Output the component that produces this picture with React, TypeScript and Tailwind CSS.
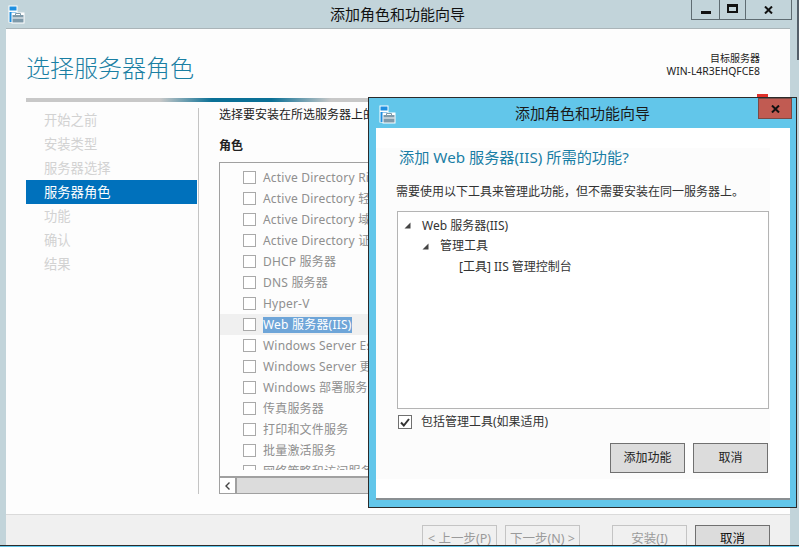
const font = "font-['Noto_Sans','Noto_Sans_CJK_SC',sans-serif]"

const steps = ["开始之前", "安装类型", "服务器选择", "服务器角色", "功能", "确认", "结果"]

const roles = [
  "Active Directory Rights Management Services",
  "Active Directory 轻型目录服务",
  "Active Directory 域服务",
  "Active Directory 证书服务",
  "DHCP 服务器",
  "DNS 服务器",
  "Hyper-V",
  "Web 服务器(IIS)",
  "Windows Server Essentials 体验",
  "Windows Server 更新服务",
  "Windows 部署服务",
  "传真服务器",
  "打印和文件服务",
  "批量激活服务",
  "网络策略和访问服务",
]

function WizardIcon() {
  return (
    <svg width="17" height="19" viewBox="0 0 17 19" className="block shrink-0">
      <rect x="0.5" y="0.5" width="9" height="17" fill="#ffffff" />
      <rect x="1.5" y="1.5" width="7" height="4" fill="#1f8fe0" />
      <rect x="1.5" y="7" width="7" height="10" fill="#1f8fe0" />
      <rect x="3.5" y="7.5" width="13" height="11" fill="#ffffff" />
      <rect x="4.5" y="10" width="11" height="7.5" fill="#7f9aaa" />
      <path d="M7.5 10V8.5h5V10" fill="none" stroke="#7f9aaa" />
      <path d="M4.5 13h11" stroke="#ffffff" />
    </svg>
  )
}

function RoleRow({ label }: { label: string }) {
  const selected = label === "Web 服务器(IIS)"
  return (
    <div className={`flex h-[21px] items-center pl-[23px] whitespace-nowrap ${selected ? "bg-[#f0f0f0]" : ""}`}>
      <span className="size-[13px] shrink-0 border border-[#a9a9a9] bg-white" />
      <span className={`ml-[7px] text-[12px] leading-[16px] tracking-[0.2px] ${selected ? "bg-[#6ea5d8] text-white" : "text-[#8f8f8f]"}`}>
        {label}
      </span>
    </div>
  )
}

function FooterButton({ label, active }: { label: string; active?: boolean }) {
  return (
    <button
      className={`h-[28px] w-[75px] border text-[12.5px] ${
        active ? "border-[#707070] bg-[#dcdcdc] text-[#111]" : "border-[#c4c4c4] bg-[#f0f0f0] text-[#9a9a9a]"
      }`}
    >
      {label}
    </button>
  )
}

function TreeArrow() {
  return (
    <svg width="7" height="7" viewBox="0 0 7 7" className="shrink-0">
      <path d="M6.5 0.5V6.5H0.5Z" fill="#444" />
    </svg>
  )
}

function FeatureDialog() {
  return (
    <div className="absolute top-[97px] left-[368px] flex h-[411px] w-[429px] flex-col border border-[#2b2b2b] bg-[#62c6ea]">
      <div className="relative flex h-[30px] shrink-0 items-center justify-center text-[15px] text-[#1a1a1a]">
        <span className="absolute top-[7px] left-[10px]">
          <WizardIcon />
        </span>
        添加角色和功能向导
        <span className="absolute top-0 right-[4px] flex h-[21px] w-[34px] items-center justify-center border border-[#7a4a45] bg-[#c15b52]">
          <svg width="9" height="8" viewBox="0 0 9 8">
            <path d="M1 0.5 8 7.5M8 0.5 1 7.5" stroke="#111" strokeWidth="2" />
          </svg>
        </span>
      </div>
      <div className="mr-[6px] ml-[7px] flex h-[372px] flex-col border-b-2 border-[#8a8f92] bg-white pt-[20px]">
        <div className="mr-[20px] flex h-[331px] flex-col bg-[#fcfcfc]">
          <h2 className="-mt-[1px] pl-[23px] text-[15.2px] leading-[20px] text-[#1a7ea5]">添加 Web 服务器(IIS) 所需的功能?</h2>
          <p className="mt-[17px] pl-[20px] text-[12px] leading-[16px] text-[#333]">需要使用以下工具来管理此功能，但不需要安装在同一服务器上。</p>
          <div className="mt-[11px] ml-[21px] h-[198px] w-[372px] border border-[#b4b4b4] bg-white pt-[3px] text-[12px] leading-[20px] text-[#333]">
            <div className="flex h-[21px] items-center pl-[6px]">
              <TreeArrow />
              <span className="ml-[11px]">Web 服务器(IIS)</span>
            </div>
            <div className="flex h-[20px] items-center pl-[24px]">
              <TreeArrow />
              <span className="ml-[11px]">管理工具</span>
            </div>
            <div className="flex h-[21px] items-center pl-[61px]">[工具] IIS 管理控制台</div>
          </div>
          <div className="mt-[5px] flex items-center pl-[22px]">
            <span className="flex size-[14px] items-center justify-center border border-[#707070] bg-white">
              <svg width="10" height="9" viewBox="0 0 10 9">
                <path d="M1 4.5 3.8 7.5 9 1" fill="none" stroke="#333" strokeWidth="2" />
              </svg>
            </span>
            <span className="ml-[9px] text-[12px] leading-[16px] text-[#333]">包括管理工具(如果适用)</span>
          </div>
          <div className="mt-[13px] flex justify-end gap-[8px] pr-[2px]">
            <button className="h-[30px] w-[75px] border border-[#707070] bg-[#dcdcdc] text-[12px] text-[#222]">添加功能</button>
            <button className="h-[30px] w-[75px] border border-[#707070] bg-[#dcdcdc] text-[12px] text-[#222]">取消</button>
          </div>
        </div>
      </div>
    </div>
  )
}

export default function App() {
  return (
    <div className={`${font} relative flex h-[547px] w-[799px] flex-col overflow-hidden bg-[#c2d4da]`}>
      {/* Title bar */}
      <div className="relative flex h-[28px] shrink-0 items-center justify-center pr-[4px] text-[15px] text-[#111]">
        <span className="absolute top-[5px] left-[8px]">
          <WizardIcon />
        </span>
        添加角色和功能向导
        <div className="absolute top-0 left-[691px] flex h-[20px] w-[101px] border-x border-b border-[#5f6c72]">
          <span className="flex w-[28px] items-center justify-center border-r border-[#5f6c72]">
            <span className="mt-[5px] h-[3px] w-[10px] bg-[#111]" />
          </span>
          <span className="flex w-[26px] items-center justify-center border-r border-[#5f6c72]">
            <span className="mb-[2px] h-[9px] w-[11px] border-2 border-t-[3px] border-[#111]" />
          </span>
          <span className="flex flex-1 items-center justify-center">
            <svg width="9" height="8" viewBox="0 0 9 8">
              <path d="M1 0.5 8 7.5M8 0.5 1 7.5" stroke="#111" strokeWidth="2" />
            </svg>
          </span>
        </div>
      </div>

      {/* Wizard body */}
      <div className="mr-[9px] ml-[6px] flex h-[486px] shrink-0 flex-col border-t border-[#aab4b8] bg-[#fdfdfd] pl-[20px]">
        <div className="flex h-[69px] shrink-0 pr-[30px]">
          <h1 className="pt-[21px] text-[24px] leading-[36px] font-light text-[#1a7fa3]">选择服务器角色</h1>
          <div className="ml-auto pt-[23px] text-right leading-[13px] text-[#222]">
            <div className="text-[10px]">目标服务器</div>
            <div className="text-[10.4px]">WIN-L4R3EHQFCE8</div>
          </div>
        </div>
        <div className="h-[4px] w-[744px] shrink-0 bg-[linear-gradient(90deg,#c8c8c8_0%,#c8c8c8_18%,#0a7096_25%,#0a7096_33%,#c8c8c8_41%,#c8c8c8_100%)]" />
        <div className="flex min-h-0 flex-1">
          <ul className="w-[171px] shrink-0 pt-[6px]">
            {steps.map((s) => (
              <li
                key={s}
                className={`flex h-[24px] items-center pt-[1px] pl-[18px] text-[13.3px] ${
                  s === "服务器角色" ? "bg-[#0071bc] text-white" : "text-[#d2d2d2]"
                }`}
              >
                {s}
              </li>
            ))}
          </ul>
          <div className="mt-[6px] mb-[20px] ml-[1px] w-px bg-[#c4c4c4]" />
          <div className="ml-[20px] flex min-w-0 flex-1 flex-col">
            <p className="pt-[5px] text-[12px] leading-[16px] whitespace-nowrap text-[#222]">选择要安装在所选服务器上的一个或多个角色。</p>
            <p className="mt-[15px] text-[12px] leading-[16px] font-bold text-[#222]">角色</p>
            <div className="mt-[8px] flex h-[332px] w-[300px] flex-col border border-[#a0a0a0]">
              <div className="h-[307px] shrink-0 overflow-hidden pt-[4px]">
                {roles.map((r) => (
                  <RoleRow key={r} label={r} />
                ))}
              </div>
              <div className="mt-auto flex h-[17px] shrink-0 border-t-2 border-[#a0a0a0] bg-[#dcdcdc]">
                <span className="flex w-[17px] items-center justify-center border-r-2 border-[#a0a0a0] bg-white">
                  <svg width="6" height="8" viewBox="0 0 6 8">
                    <path d="M4.5 0.5 1 4l3.5 3.5" fill="none" stroke="#444" strokeWidth="1.4" />
                  </svg>
                </span>
              </div>
            </div>
          </div>
        </div>
      </div>

      {/* Wizard footer */}
      <div className="mr-[9px] ml-[6px] flex min-h-0 flex-1 items-start border-t border-[#dadada] bg-[#f0f0f0] pt-[10px]">
        <div className="ml-[416px] flex gap-[8px]">
          <FooterButton label="< 上一步(P)" />
          <FooterButton label="下一步(N) >" />
        </div>
        <div className="ml-[32px] flex gap-[8px]">
          <FooterButton label="安装(I)" />
          <FooterButton label="取消" active />
        </div>
      </div>
      <div className="absolute inset-x-0 bottom-0 h-[2px] border-t border-[#2b2b2b] bg-[#62c6ea]" />

      {/* Edge of the window behind, at the far right */}
      <span className="absolute top-0 right-0 h-[60px] w-[2px] bg-[#55606a]" />

      {/* Notification flag peeking out above the dialog */}
      <span className="absolute top-[94px] left-[757px] h-[3px] w-[11px] bg-[#e0302a]" />
      <FeatureDialog />
    </div>
  )
}
